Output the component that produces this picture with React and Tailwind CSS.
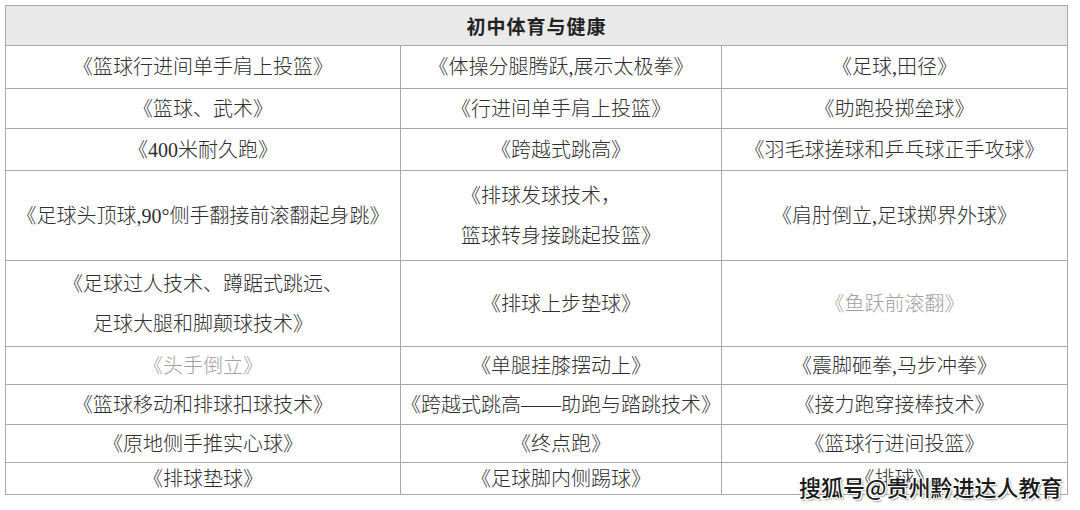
import React from "react";

const rows = [
  { h: "h-[43px]", cells: [["《篮球行进间单手肩上投篮》"], ["《体操分腿腾跃,展示太极拳》"], ["《足球,田径》"]] },
  { h: "h-[40px]", cells: [["《篮球、武术》"], ["《行进间单手肩上投篮》"], ["《助跑投掷垒球》"]] },
  { h: "h-[42px]", cells: [["《400米耐久跑》"], ["《跨越式跳高》"], ["《羽毛球搓球和乒乓球正手攻球》"]] },
  { h: "h-[90px]", cells: [["《足球头顶球,90°侧手翻接前滚翻起身跳》"], ["《排球发球技术，", "篮球转身接跳起投篮》"], ["《肩肘倒立,足球掷界外球》"]], leftCol: 1 },
  { h: "h-[86px]", cells: [["《足球过人技术、蹲踞式跳远、", "足球大腿和脚颠球技术》"], ["《排球上步垫球》"], ["《鱼跃前滚翻》"]], gray: [2] },
  { h: "h-[38px]", cells: [["《头手倒立》"], ["《单腿挂膝摆动上》"], ["《震脚砸拳,马步冲拳》"]], gray: [0] },
  { h: "h-[40px]", cells: [["《篮球移动和排球扣球技术》"], ["《跨越式跳高——助跑与踏跳技术》"], ["《接力跑穿接棒技术》"]] },
  { h: "h-[38px]", cells: [["《原地侧手推实心球》"], ["《终点跑》"], ["《篮球行进间投篮》"]] },
  { h: "h-[32px]", cells: [["《排球垫球》"], ["《足球脚内侧踢球》"], ["《排球》"]] },
];

export default function App() {
  return (
    <div className="relative w-[1080px] h-[510px] bg-white overflow-hidden font-['Liberation_Serif','Noto_Sans_CJK_SC',serif]">
      <div className="pl-[5px] pt-[5px]">
        <table className="table-fixed w-[1062px] border-collapse text-[#2e2e2e] text-[20px]">
          <colgroup>
            <col className="w-[395px]" />
            <col className="w-[321px]" />
            <col className="w-[346px]" />
          </colgroup>
          <tbody>
            <tr className="h-[40px] bg-[#e9e9e9]">
              <td colSpan={3} className="border border-[#a8a8a8] text-center font-bold font-['Noto_Sans_CJK_SC',sans-serif] text-[19px] leading-[24px] text-[#222] tracking-[1px] p-0">
                初中体育与健康
              </td>
            </tr>
            {rows.map((r, i) => (
              <tr key={i} className={r.h}>
                {r.cells.map((lines, j) => {
                  const gray = r.gray && r.gray.includes(j);
                  const left = r.leftCol === j;
                  const multi = lines.length > 1;
                  return (
                    <td
                      key={j}
                      className={`border border-[#a8a8a8] text-center p-0 font-light ${multi ? "leading-[40px]" : "leading-[24px]"} ${gray ? "text-[#a0a0a0]" : ""}`}
                    >
                      {left ? (
                        <div className="inline-block text-left">
                          {lines.map((l, k) => (
                            <div key={k}>{l}</div>
                          ))}
                        </div>
                      ) : (
                        lines.map((l, k) => <div key={k}>{l}</div>)
                      )}
                    </td>
                  );
                })}
              </tr>
            ))}
          </tbody>
        </table>
      </div>
      <div className="absolute left-[799px] top-[471px] text-[22px] font-medium text-[#1a1a1a] font-['Noto_Sans_CJK_SC',sans-serif] leading-[30px] [text-shadow:1px_1px_0_#fff,-1px_-1px_0_#fff,1px_-1px_0_#fff,-1px_1px_0_#fff,2px_2px_2px_#999]">
        搜狐号@贵州黔进达人教育
      </div>
    </div>
  );
}
